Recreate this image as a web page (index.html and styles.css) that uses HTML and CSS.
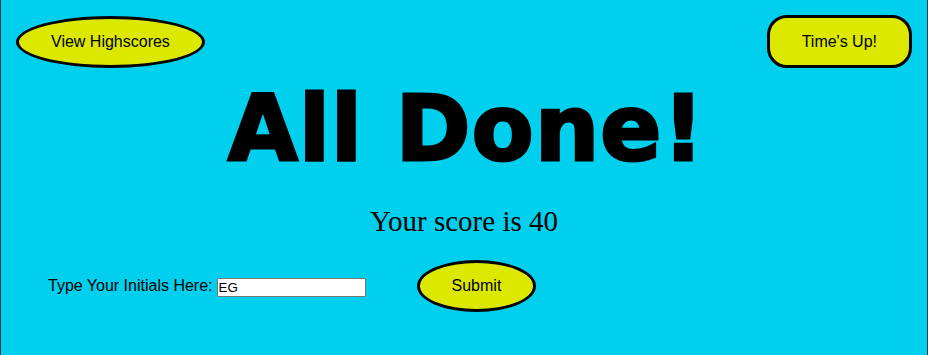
FILE: index.html
```html
<!DOCTYPE html>
<html lang="en">
<head>
<meta charset="utf-8">
<title>All Done!</title>
<link rel="stylesheet" href="styles.css">
</head>
<body>
<div class="page">
  <header class="top-bar">
    <button class="btn btn-oval" type="button">View Highscores</button>
    <button class="btn btn-rounded" type="button">Time's Up!</button>
  </header>
  <main class="content">
    <h1 class="title">All Done!</h1>
    <p class="score">Your score is 40</p>
    <form class="initials-form">
      <label class="initials-label" for="initials">Type Your Initials Here:</label>
      <input class="initials-input" id="initials" type="text" value="EG">
      <button class="btn btn-oval btn-submit" type="button">Submit</button>
    </form>
  </main>
</div>
</body>
</html>
```
FILE: styles.css
```css
html, body {
  margin: 0;
  padding: 0;
  background: #00d0ee;
}

.page {
  box-sizing: border-box;
  width: 928px;
  min-height: 355px;
  border-left: 1px solid #333;
  border-right: 1px solid #333;
  background: #00d0ee;
  font-family: "Liberation Sans", Arial, sans-serif;
  color: #000;
}

.top-bar {
  display: flex;
  justify-content: space-between;
  align-items: flex-start;
  padding: 16px 15px 0 15px;
}

.btn {
  box-sizing: border-box;
  margin: 0;
  padding: 14px 32px;
  border: 3px solid #000;
  background: #dde800;
  color: #000;
  font-family: "Liberation Sans", Arial, sans-serif;
  font-size: 16px;
  line-height: 18px;
  cursor: pointer;
}

.btn-oval {
  border-radius: 50%;
}

.btn-rounded {
  border-radius: 20px;
  margin-top: -1px;
  padding-top: 14.5px;
  padding-bottom: 14.5px;
}

.content {
  display: flex;
  flex-direction: column;
}

.title {
  margin: 6px 0 0 0;
  padding-left: 5px;
  text-align: center;
  font-family: "DejaVu Sans", Verdana, sans-serif;
  font-weight: bold;
  font-size: 90px;
  line-height: 109px;
  letter-spacing: 1.3px;
  -webkit-text-stroke: 3px #000;
}

.score {
  margin: 22px 0 0 0;
  text-align: center;
  font-family: "Liberation Serif", "Times New Roman", serif;
  font-size: 29px;
  line-height: 33px;
}

.initials-form {
  display: flex;
  align-items: flex-start;
  margin: 22px 0 0 0;
  padding-left: 47px;
}

.initials-label {
  margin-top: 17px;
  font-size: 16px;
  line-height: 18px;
}

.initials-input {
  box-sizing: border-box;
  width: 149px;
  height: 19px;
  margin: 18px 0 0 4px;
  padding: 1px 1px;
  border: 1px solid #767676;
  border-radius: 1px;
  background: #fff;
  font-family: "Liberation Sans", Arial, sans-serif;
  font-size: 13.33px;
  color: #000;
}

.btn-submit {
  margin-left: 51px;
}
```
